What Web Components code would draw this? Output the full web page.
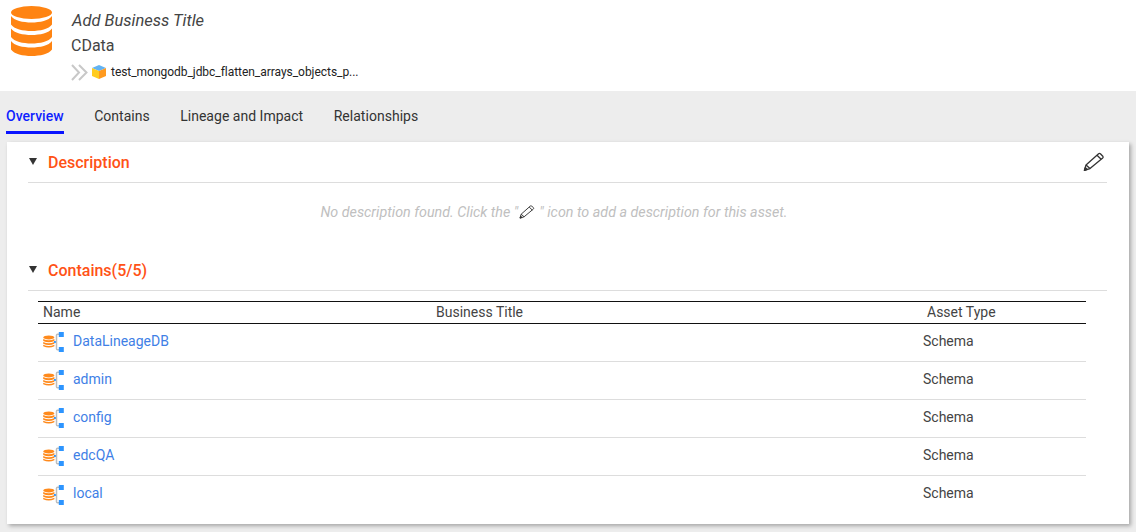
<!DOCTYPE html>
<html>
<head>
<meta charset="utf-8">
<title>CData</title>
<style>
    html, body { margin: 0; height: 100%; }
    body { background: #ededed; font-family: Roboto, "Liberation Sans", sans-serif; overflow: hidden; }
</style>
</head>
<body>
<asset-page></asset-page>
<script>
const pencil = `<svg viewBox="0 0 22 20" width="100%" height="100%" fill="none" stroke="currentColor" stroke-width="1.3" stroke-linejoin="round">
    <path d="M1.4 18.4 L3 13 L15.6 1.8 Q16.5 1 17.4 1.7 L19.8 4.2 Q20.6 5.2 19.7 6 L7 16.6 Z"/>
    <path d="M3 13 L7 16.6 M14 3.2 L18.2 7.3"/>
    <path d="M1.4 18.4 L2.2 15.6 L4.3 17.5 Z" fill="currentColor"/>
</svg>`

class DbIcon extends HTMLElement {
    constructor() {
        super()
        this.attachShadow({mode: 'open'})
        this.shadowRoot.innerHTML = `
            <style>
                :host { display: block; width: 41px; height: 50px; }
                svg { display: block; }
            </style>
            <svg viewBox="0 0 41 50" width="41" height="50" fill="#ff8412">
                <ellipse cx="20.5" cy="6.5" rx="20.5" ry="6.5"/>
                <path d="M0 10 C3 14.5 12 16.5 20.5 16.5 C29 16.5 38 14.5 41 10 V18.500 C38 23 29 25 20.5 25 C12 25 3 23 0 18.500 Z"/>
                <path d="M0 22.500 C3 27 12 29 20.5 29 C29 29 38 27 41 22.500 V31 C38 35.500 29 37.500 20.5 37.500 C12 37.500 3 35.500 0 31 Z"/>
                <path d="M0 35 C3 39.500 12 41.500 20.500 41.500 C29 41.500 38 39.500 41 35 V43.500 C38 48 29 50 20.500 50 C12 50 3 48 0 43.500 Z"/>
            </svg>`
    }
}
customElements.define('db-icon', DbIcon)

class AssetHeader extends HTMLElement {
    constructor() {
        super()
        this.attachShadow({mode: 'open'})
        this.shadowRoot.innerHTML = `
            <style>
                :host { display: flex; height: 91px; background: #fff; box-sizing: border-box; padding: 6px 0 0 11px; }
                .text { margin-left: 19px; margin-top: 3px; color: #444; }
                .title { font-size: 16.500px; font-style: italic; line-height: 24px; padding-left: 1px; }
                .name { font-size: 16px; line-height: 26px; }
                .path { display: flex; align-items: center; height: 18px; margin-top: 4px; font-size: 12px; color: #222; }
                .path svg { display: block; flex: none; }
                .label { margin-left: 4px; letter-spacing: -.04px; }
            </style>
            <db-icon></db-icon>
            <div class="text">
                <div class="title">Add Business Title</div>
                <div class="name">CData</div>
                <div class="path">
                    <svg width="17" height="17" viewBox="0 0 17 17" fill="none" stroke="#c8c8c8" stroke-width="2">
                        <path d="M1 1 L8 8.500 L1 16 M8 1 L15.500 8.500 L8 16"/>
                    </svg>
                    <svg style="margin-left:3px" width="16" height="16" viewBox="0 0 16 16">
                        <path d="M8 1 L15 4 L8 7 L1 4 Z" fill="#63b3f2"/>
                        <path d="M1 4 L8 7 V15 L1 12 Z" fill="#ffcc1f"/>
                        <path d="M15 4 L8 7 V15 L15 12 Z" fill="#ff9a1f"/>
                    </svg>
                    <span class="label">test_mongodb_jdbc_flatten_arrays_objects_p...</span>
                </div>
            </div>`
    }
}
customElements.define('asset-header', AssetHeader)

class TabBar extends HTMLElement {
    constructor() {
        super()
        this.attachShadow({mode: 'open'})
        this.shadowRoot.innerHTML = `
            <style>
                :host { display: flex; gap: 30.500px; height: 51px; box-sizing: border-box; padding: 16px 0 0 6px; font-size: 14px; color: #333; }
                div { height: 24px; line-height: 18px; letter-spacing: .02px; }
                .on { color: #0f1fff; font-weight: 500; border-bottom: 3px solid #0a14ff; }
            </style>
            <div class="on">Overview</div>
            <div>Contains</div>
            <div>Lineage and Impact</div>
            <div>Relationships</div>`
    }
}
customElements.define('tab-bar', TabBar)

class AssetSection extends HTMLElement {
    constructor() {
        super()
        this.attachShadow({mode: 'open'})
        this.shadowRoot.innerHTML = `
            <style>
                :host { display: block; padding: 0 22px 0 21px; }
                .head { display: flex; align-items: center; height: 40px; border-bottom: 1px solid #ddd; }
                .arrow { width: 0; height: 0; margin-left: 1px; border-left: 4px solid transparent; border-right: 4px solid transparent; border-top: 7px solid #333; margin-bottom: 2px; }
                h2 { margin: 2px 0 0 11px; font-size: 16px; font-weight: 500; color: #ff5216; line-height: 20px; flex: 1; }
            </style>
            <div class="head">
                <div class="arrow"></div>
                <h2><slot name="title"></slot></h2>
                <slot name="action"></slot>
            </div>
            <slot></slot>`
    }
}
customElements.define('asset-section', AssetSection)

class PencilIcon extends HTMLElement {
    constructor() {
        super()
        this.attachShadow({mode: 'open'})
        this.shadowRoot.innerHTML = `
            <style>
                :host { display: inline-block; width: var(--size, 22px); height: var(--size, 22px); color: #333; vertical-align: middle; }
            </style>
            ${pencil}`
    }
}
customElements.define('pencil-icon', PencilIcon)

class SchemaRow extends HTMLElement {
    constructor() {
        super()
        this.attachShadow({mode: 'open'})
        this.shadowRoot.innerHTML = `
            <style>
                :host { display: grid; grid-template-columns: 393px 492px 1fr; height: 38px; box-sizing: border-box; border-bottom: 1px solid #ddd; align-items: center; font-size: 14px; color: #444; }
                :host(:last-child) { border-bottom: 0; }
                .name { display: flex; align-items: center; padding-left: 5px; color: #3f7fe6; }
                .name span { margin-bottom: 4px; }
                svg { display: block; margin: 0 9px 1px 0; flex: none; }
                .type { margin-bottom: 4px; }
            </style>
            <div class="name">
                <svg width="21" height="20" viewBox="0 0 21 20">
                    <g fill="#ff8a1c">
                        <ellipse cx="5.800" cy="5.400" rx="5.600" ry="2"/>
                        <path d="M.2 7 Q5.800 9.700 11.400 7 V8.900 Q5.800 11.600 .2 8.900 Z"/>
                        <path d="M.2 9.900 Q5.800 12.600 11.400 9.900 V11.700 Q5.800 14.400 .2 11.700 Z"/>
                        <path d="M.2 12.700 Q5.800 15.400 11.400 12.700 V14.200 Q5.800 16.600 .2 14.200 Z"/>
                    </g>
                    <rect x="11" y="9" width="2.500" height="2" fill="#39f"/>
                    <path d="M17 2.200 H14.500 Q13.500 2.200 13.500 3.200 V16.800 Q13.500 17.800 14.500 17.800 H17" fill="none" stroke="#bdbdbd" stroke-width="1.500"/>
                    <rect x="15.800" y="0" width="5" height="5" fill="#2d95ff"/>
                    <rect x="15.800" y="15" width="5" height="5" fill="#2d95ff"/>
                </svg>
                <span>${this.getAttribute('name')}</span>
            </div>
            <div></div>
            <div class="type">Schema</div>`
    }
}
customElements.define('schema-row', SchemaRow)

class ContainsTable extends HTMLElement {
    constructor() {
        super()
        this.attachShadow({mode: 'open'})
        this.shadowRoot.innerHTML = `
            <style>
                :host { display: block; margin: 10px 21px 0 10px; }
                .cols { display: grid; grid-template-columns: 393px 491px 1fr; height: 23px; box-sizing: border-box; padding: 0 0 2px 5px; align-items: center; font-size: 14px; color: #444; border-top: 1px solid #111; border-bottom: 1px solid #111; }
            </style>
            <div class="cols"><div>Name</div><div>Business Title</div><div>Asset Type</div></div>
            <slot></slot>`
    }
}
customElements.define('contains-table', ContainsTable)

class AssetPage extends HTMLElement {
    constructor() {
        super()
        this.attachShadow({mode: 'open'})
        this.shadowRoot.innerHTML = `
            <style>
                :host { display: block; }
                .card { height: 382px; margin: 0 7px 0 7px; background: #fff; box-sizing: border-box; box-shadow: 2px 2px 4px rgba(0,0,0,.3); }
                .empty { height: 58px; display: flex; align-items: center; justify-content: center; padding: 0 27px 2px 0; margin-bottom: 7px; font-size: 14.300px; font-style: italic; color: #c0c0c0; --size: 16px; }
                .empty pencil-icon { margin: 0 4px 0 1px; }
            </style>
            <asset-header></asset-header>
            <tab-bar></tab-bar>
            <div class="card">
                <asset-section>
                    <span slot="title">Description</span>
                    <pencil-icon slot="action" style="margin-right:2px"></pencil-icon>
                    <div class="empty"><span>No description found. Click the "</span><pencil-icon></pencil-icon><span>" icon to add a description for this asset.</span></div>
                </asset-section>
                <asset-section>
                    <span slot="title">Contains(5/5)</span>
                    <contains-table>
                        <schema-row name="DataLineageDB"></schema-row>
                        <schema-row name="admin"></schema-row>
                        <schema-row name="config"></schema-row>
                        <schema-row name="edcQA"></schema-row>
                        <schema-row name="local"></schema-row>
                    </contains-table>
                </asset-section>
            </div>`
    }
}
customElements.define('asset-page', AssetPage)
</script>
</body>
</html>
